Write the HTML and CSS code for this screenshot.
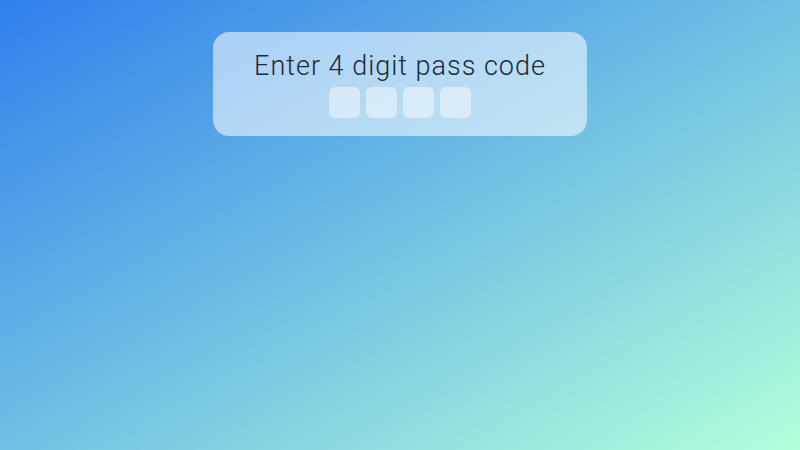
FILE: index.html
```html
<!DOCTYPE html>
<html>
<head>
<meta charset="utf-8">
<link rel="stylesheet" href="styles.css">
</head>
<body>
<div class="page">
  <div class="card">
    <div class="title">Enter 4 digit pass code</div>
    <div class="boxes">
      <div class="box"></div>
      <div class="box"></div>
      <div class="box"></div>
      <div class="box"></div>
    </div>
  </div>
</div>
</body>
</html>
```
FILE: styles.css
```css
html, body {
  margin: 0;
  padding: 0;
  height: 100%;
}
body {
  font-family: Roboto, "Liberation Sans", sans-serif;
}
.page {
  height: 100%;
  background: linear-gradient(to bottom right, #2f80ed 0%, #b2ffda 100%);
  display: flex;
  flex-direction: column;
  align-items: center;
  padding-top: 32px;
  box-sizing: border-box;
}
.card {
  width: 374px;
  height: 104px;
  box-sizing: border-box;
  border-radius: 16px;
  background: rgba(255, 255, 255, 0.55);
  display: flex;
  flex-direction: column;
  align-items: center;
  padding-top: 18px;
  gap: 5px;
}
.title {
  font-size: 27px;
  font-weight: 300;
  letter-spacing: 1px;
  color: #1c2a38;
  line-height: 32px;
}
.boxes {
  display: flex;
  gap: 6px;
}
.box {
  width: 31px;
  height: 31px;
  border-radius: 6px;
  background: rgba(255, 255, 255, 0.45);
}
```
